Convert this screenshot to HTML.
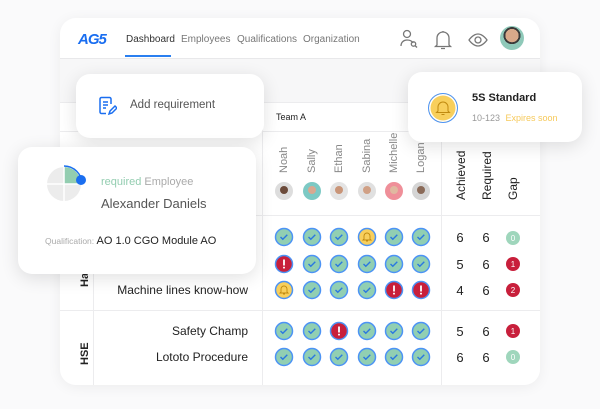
<!DOCTYPE html><html><head><style>
body{margin:0;width:600px;height:409px;background:#fff;font-family:"Liberation Sans",sans-serif;position:relative;overflow:hidden}
.a{position:absolute}
.card{position:absolute;background:#fff;border-radius:14px;box-shadow:0 4px 18px rgba(0,0,0,.12)}
.rot{position:absolute;transform:rotate(-90deg);transform-origin:left bottom;white-space:nowrap}
.lbl{position:absolute;right:352px;font-size:12px;color:#222;text-align:right;white-space:nowrap}
</style></head><body>
<div class="a" style="left:0;top:0;width:600px;height:409px;background:#fafafb"></div>
<div class="card" style="left:60px;top:18px;width:480px;height:367px;border-radius:16px;box-shadow:0 2px 14px rgba(0,0,0,.06);overflow:hidden">
 <div class="a" style="left:0;top:40px;width:480px;height:1px;background:#e8e8ea"></div>
 <div class="a" style="left:0;top:41px;width:480px;height:326px;background:#f7f7f8"></div>
 <div class="a" style="left:0;top:84px;width:480px;height:283px;background:#fff"></div>
 <div class="a" style="left:0;top:84px;width:480px;height:1px;background:#ececee"></div>
 <div class="a" style="left:0;top:113px;width:480px;height:1px;background:#ececee"></div>
 <div class="a" style="left:0;top:197px;width:480px;height:1px;background:#ececee"></div>
 <div class="a" style="left:0;top:292px;width:480px;height:1px;background:#ececee"></div>
 <div class="a" style="left:202px;top:84px;width:1px;height:283px;background:#ececee"></div>
 <div class="a" style="left:381px;top:113px;width:1px;height:254px;background:#ececee"></div>
 <div class="a" style="left:33px;top:197px;width:1px;height:170px;background:#ececee"></div>
</div>
<div class="a" style="left:78px;top:31px;font-size:15px;font-weight:bold;font-style:italic;color:#1a6ef0;letter-spacing:-1px">AG5</div>
<div class="a" style="left:126px;top:34px;font-size:10px;color:#333">Dashboard</div>
<div class="a" style="left:125px;top:55px;width:46px;height:2px;background:#2a7ff0"></div>
<div class="a" style="left:181px;top:34px;font-size:10px;color:#777">Employees</div>
<div class="a" style="left:237px;top:34px;font-size:10px;color:#777">Qualifications</div>
<div class="a" style="left:303px;top:34px;font-size:10px;color:#777">Organization</div>
<svg class="a" style="left:398px;top:28px" width="100" height="24" fill="none" stroke="#777" stroke-width="1.3">
<circle cx="9" cy="6" r="3.5"/><path d="M3 18c0-4 3-6 6-6s5 1 6 3"/><circle cx="15.5" cy="16" r="2.2"/><path d="M17 17.5l2 2"/>
<path d="M39 17V10a6 6 0 0 1 12 0v7l1.5 1.5h-15z M43 20.5h4"/><path d="M45 3v1"/>
<path d="M71 12s4-6 9-6 9 6 9 6-4 6-9 6-9-6-9-6z"/><circle cx="80" cy="12" r="3"/>
</svg>
<div class="a" style="left:500px;top:26px;width:24px;height:24px;border-radius:50%;background:radial-gradient(circle at 50% 40%,#d9a98a 0 35%,#3a3a3a 36% 45%,#8fc9b9 46%)"></div>
<div class="a" style="left:276px;top:112px;font-size:9px;color:#222">Team A</div>

<div class="rot" style="left:290px;top:161px;font-size:11px;color:#888">Noah</div>
<div class="rot" style="left:318px;top:161px;font-size:11px;color:#888">Sally</div>
<div class="rot" style="left:345px;top:161px;font-size:11px;color:#888">Ethan</div>
<div class="rot" style="left:373px;top:161px;font-size:11px;color:#888">Sabina</div>
<div class="rot" style="left:400px;top:161px;font-size:11px;color:#888">Michelle</div>
<div class="rot" style="left:427px;top:161px;font-size:11px;color:#888">Logan</div>
<div class="rot" style="left:468px;top:186px;font-size:12px;color:#222">Achieved</div>
<div class="rot" style="left:494px;top:186px;font-size:12px;color:#222">Required</div>
<div class="rot" style="left:520px;top:186px;font-size:12px;color:#222">Gap</div>
<div class="rot" style="left:91px;top:275px;font-size:11px;color:#222;font-weight:bold">Ha</div>
<div class="rot" style="left:91px;top:353px;font-size:11px;color:#222;font-weight:bold">HSE</div>

<div class="lbl" style="top:283px">Machine lines know-how</div>
<div class="lbl" style="top:324px">Safety Champ</div>
<div class="lbl" style="top:350px">Lototo Procedure</div>

<svg class="a" style="left:0;top:0" width="600" height="409">
<defs>
<g id="g"><circle r="8.5" fill="#91cfb2" stroke="#4c93f5" stroke-width="1.5"/><path d="M-3.5 0l2.3 2.3 4.5-4.5" fill="none" stroke="#2a78e0" stroke-width="1.4"/></g>
<g id="r"><circle r="8.5" fill="#c81f3b" stroke="#4c93f5" stroke-width="1.5"/><rect x="-0.9" y="-4.5" width="1.8" height="6" fill="#fff"/><circle cy="3.6" r="1" fill="#fff"/></g>
<g id="y"><circle r="8.5" fill="#f8cf5c" stroke="#4c93f5" stroke-width="1.5"/><path d="M-3 2v-3a3 3 0 0 1 6 0v3l1 1h-8z M-1 4h2" fill="none" stroke="#c08a10" stroke-width="0.9"/></g>
</defs>
<g>
<circle cx="284" cy="191" r="9" fill="#ddd"/><circle cx="284" cy="190" r="4" fill="#6b4a3a"/>
<circle cx="312" cy="191" r="9" fill="#7cc9c4"/><circle cx="312" cy="190" r="4" fill="#d8a890"/>
<circle cx="339" cy="191" r="9" fill="#e4e4e4"/><circle cx="339" cy="190" r="4" fill="#c99578"/>
<circle cx="367" cy="191" r="9" fill="#e0e0e0"/><circle cx="367" cy="190" r="4" fill="#d0a085"/>
<circle cx="394" cy="191" r="9" fill="#ef8f99"/><circle cx="394" cy="190" r="4" fill="#e0b8a0"/>
<circle cx="421" cy="191" r="9" fill="#d5d5d5"/><circle cx="421" cy="190" r="4" fill="#8a6a58"/>
</g>
<use href="#g" x="284" y="237"/><use href="#g" x="312" y="237"/><use href="#g" x="339" y="237"/><use href="#y" x="367" y="237"/><use href="#g" x="394" y="237"/><use href="#g" x="421" y="237"/>
<use href="#r" x="284" y="264"/><use href="#g" x="312" y="264"/><use href="#g" x="339" y="264"/><use href="#g" x="367" y="264"/><use href="#g" x="394" y="264"/><use href="#g" x="421" y="264"/>
<use href="#y" x="284" y="290"/><use href="#g" x="312" y="290"/><use href="#g" x="339" y="290"/><use href="#g" x="367" y="290"/><use href="#r" x="394" y="290"/><use href="#r" x="421" y="290"/>
<use href="#g" x="284" y="331"/><use href="#g" x="312" y="331"/><use href="#r" x="339" y="331"/><use href="#g" x="367" y="331"/><use href="#g" x="394" y="331"/><use href="#g" x="421" y="331"/>
<use href="#g" x="284" y="357"/><use href="#g" x="312" y="357"/><use href="#g" x="339" y="357"/><use href="#g" x="367" y="357"/><use href="#g" x="394" y="357"/><use href="#g" x="421" y="357"/>
<circle cx="513" cy="238" r="7" fill="#9fd6bc"/><circle cx="513" cy="264" r="7" fill="#c81f3b"/><circle cx="513" cy="290" r="7" fill="#c81f3b"/><circle cx="513" cy="331" r="7" fill="#c81f3b"/><circle cx="513" cy="357" r="7" fill="#9fd6bc"/>
<g font-family="Liberation Sans" font-size="8" fill="#fff" text-anchor="middle"><text x="513" y="241">0</text><text x="513" y="267">1</text><text x="513" y="293">2</text><text x="513" y="334">1</text><text x="513" y="360">0</text></g>
<g font-family="Liberation Sans" font-size="13" fill="#222" text-anchor="middle">
<text x="460" y="242">6</text><text x="486" y="242">6</text>
<text x="460" y="269">5</text><text x="486" y="269">6</text>
<text x="460" y="295">4</text><text x="486" y="295">6</text>
<text x="460" y="336">5</text><text x="486" y="336">6</text>
<text x="460" y="362">6</text><text x="486" y="362">6</text>
</g>
</svg>

<div class="card" style="left:76px;top:74px;width:188px;height:64px">
 <svg class="a" style="left:23px;top:22px" width="18" height="20" fill="none" stroke="#1a6ef0" stroke-width="1.5"><path d="M12 8V3a1.5 1.5 0 0 0-1.5-1.5h-8A1.5 1.5 0 0 0 1 3v13a1.5 1.5 0 0 0 1.5 1.5H7"/><path d="M4 6h5M4 9h5M4 12h3"/><path d="M10 18l1-3 5-5 2 2-5 5z"/></svg>
 <div class="a" style="left:54px;top:25px;font-size:11.5px;color:#555">Add requirement</div>
</div>
<div class="card" style="left:408px;top:72px;width:174px;height:70px">
 <div class="a" style="left:20px;top:21px;width:28px;height:28px;border-radius:50%;background:#f8cf5c;border:1.5px solid #4c93f5;box-shadow:inset 0 0 0 1.5px #fff"></div>
 <svg class="a" style="left:26px;top:27px" width="18" height="18" fill="none" stroke="#c08a10" stroke-width="1"><path d="M4 12V8a5 5 0 0 1 10 0v4l1.5 1.5h-13z M7.5 15.5h3"/></svg>
 <div class="a" style="left:64px;top:20px;font-size:11px;font-weight:bold;color:#222">5S Standard</div>
 <div class="a" style="left:64px;top:41px;font-size:9px;color:#999">10-123 <span style="color:#f6c95a;margin-left:3px">Expires soon</span></div>
</div>
<div class="card" style="left:18px;top:147px;width:238px;height:127px">
 <svg class="a" style="left:26px;top:14px" width="50" height="50"><circle cx="20" cy="23" r="17" fill="#ececec"/><path d="M20 23V6a17 17 0 0 1 17 17z" fill="#93cdb0"/><path d="M3 23h34M20 6v34" stroke="#fff" stroke-width="1.5"/><path d="M20 5a18 18 0 0 1 18 18" fill="none" stroke="#1a6ef0" stroke-width="1.5"/><circle cx="37" cy="19" r="5" fill="#1a6ef0"/></svg>
 <div class="a" style="left:83px;top:29px;font-size:11px;color:#aaa"><span style="color:#93cdb0">required</span> Employee</div>
 <div class="a" style="left:83px;top:49px;font-size:13px;color:#555">Alexander Daniels</div>
 <div class="a" style="left:27px;top:88px;font-size:8.5px;color:#aaa">Qualification: <span style="font-size:11px;color:#222">AO 1.0 CGO Module AO</span></div>
</div>
</body></html>
